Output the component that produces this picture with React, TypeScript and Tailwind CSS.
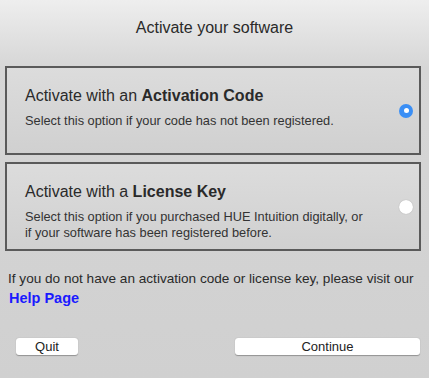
import React, { useState } from 'react';

const font = { fontFamily: '"Liberation Sans", Arial, sans-serif' };

interface OptionProps {
  lead: string;
  strong: string;
  children: React.ReactNode;
  selected: boolean;
  onSelect: () => void;
}

function Option({ lead, strong, children, selected, onSelect }: OptionProps) {
  return (
    <div
      onClick={onSelect}
      className="ml-[5px] flex h-[89px] w-[416px] items-start justify-between border-2 border-[#5a5a5a] bg-gradient-to-b from-[#dcdcdc] to-[#d0d0d0] pl-[18px] pr-[6px] pt-[18px]"
    >
      <div className="flex flex-col">
        <div className="text-[16px] leading-[20px] text-[#2a2a2a]">
          {lead} <span className="font-bold">{strong}</span>
        </div>
        <div className="mt-[7px] text-[12.8px] leading-[16px] text-[#333]">{children}</div>
      </div>
      {selected ? (
        <div className="-mt-[18px] flex h-[14px] w-[14px] items-center justify-center self-center rounded-full bg-[#3b8ff5]">
          <div className="h-[5px] w-[5px] rounded-full bg-white" />
        </div>
      ) : (
        <div className="-mt-[18px] h-[14px] w-[14px] self-center rounded-full bg-white shadow-[0_0_1px_rgba(0,0,0,0.3)]" />
      )}
    </div>
  );
}

export default function App() {
  const [choice, setChoice] = useState<'code' | 'key'>('code');

  return (
    <div
      style={font}
      className="flex h-[378px] w-[429px] flex-col bg-gradient-to-b from-[#eeeeee] via-[#d6d6d6] via-[18%] to-[#d0d0d0]"
    >
      <div className="pt-[18px] text-center text-[16px] leading-[20px] text-[#2a2a2a]">
        Activate your software
      </div>

      <div className="mt-[28px] flex flex-col gap-[7px]">
        <Option
          lead="Activate with an"
          strong="Activation Code"
          selected={choice === 'code'}
          onSelect={() => setChoice('code')}
        >
          Select this option if your code has not been registered.
        </Option>
        <Option
          lead="Activate with a"
          strong="License Key"
          selected={choice === 'key'}
          onSelect={() => setChoice('key')}
        >
          Select this option if you purchased HUE Intuition digitally, or
          <br />
          if your software has been registered before.
        </Option>
      </div>

      <div className="mt-[19px] pl-[8px] text-[13.6px] leading-[18px] text-[#2a2a2a]">
        If you do not have an activation code or license key, please visit our
      </div>
      <div className="pl-[9px] pt-[1px] text-[14.5px] font-bold leading-[18px] text-[#1a1aff]">Help Page</div>

      <div className="mt-[31px] flex items-center justify-between pl-[16px] pr-[9px]">
        <button className="h-[17px] w-[62px] rounded-[3px] bg-white text-[13px] leading-[17px] text-[#222] shadow-[0_0.5px_1px_rgba(0,0,0,0.3)]">
          Quit
        </button>
        <button className="h-[17px] w-[185px] rounded-[3px] bg-white text-[13px] leading-[17px] text-[#222] shadow-[0_0.5px_1px_rgba(0,0,0,0.3)]">
          Continue
        </button>
      </div>
    </div>
  );
}
